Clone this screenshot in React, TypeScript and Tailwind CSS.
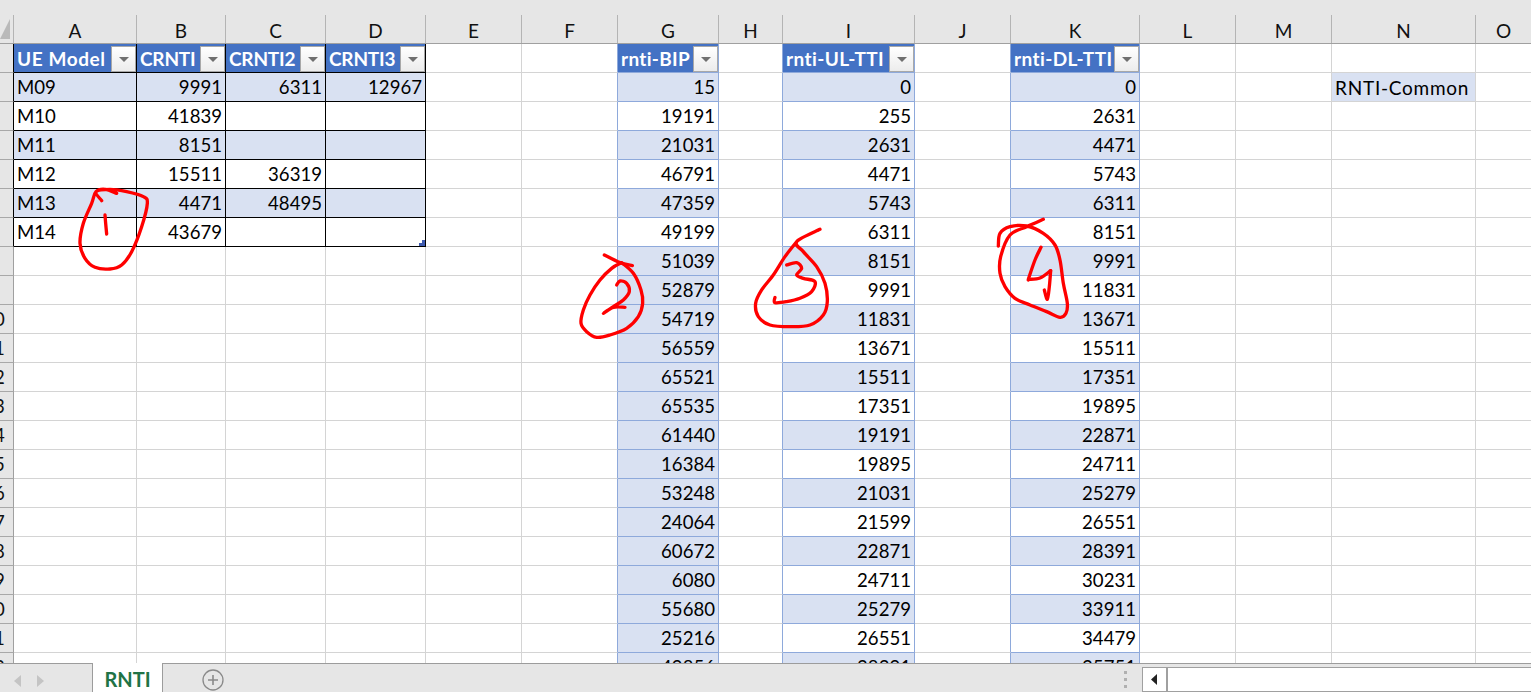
import React from "react";

type Col = { k: string; w: string };
const COLS: Col[] = [
  { k: "A", w: "w-[123px]" },
  { k: "B", w: "w-[89px]" },
  { k: "C", w: "w-[100px]" },
  { k: "D", w: "w-[100px]" },
  { k: "E", w: "w-[96px]" },
  { k: "F", w: "w-[96px]" },
  { k: "G", w: "w-[101px]" },
  { k: "H", w: "w-[64px]" },
  { k: "I", w: "w-[132px]" },
  { k: "J", w: "w-[96px]" },
  { k: "K", w: "w-[129px]" },
  { k: "L", w: "w-[96px]" },
  { k: "M", w: "w-[96px]" },
  { k: "N", w: "w-[144px]" },
  { k: "O", w: "w-[56px]" },
];

const T1: Record<string, string[]> = {
  A: ["M09", "M10", "M11", "M12", "M13", "M14"],
  B: ["9991", "41839", "8151", "15511", "4471", "43679"],
  C: ["6311", "", "", "36319", "48495", ""],
  D: ["12967", "", "", "", "", ""],
};
const T2: Record<string, string[]> = {
  G: ["15","19191","21031","46791","47359","49199","51039","52879","54719","56559","65521","65535","61440","16384","53248","24064","60672","6080","55680","25216","49856"],
  I: ["0","255","2631","4471","5743","6311","8151","9991","11831","13671","15511","17351","19191","19895","21031","21599","22871","24711","25279","26551","28391"],
  K: ["0","2631","4471","5743","6311","8151","9991","11831","13671","15511","17351","19895","22871","24711","25279","26551","28391","30231","33911","34479","35751"],
};
const HEAD: Record<string, { text: string; cls: string }> = {
  A: { text: "UE Model", cls: "tracking-[0.6px]" },
  B: { text: "CRNTI", cls: "tracking-[-0.2px]" },
  C: { text: "CRNTI2", cls: "tracking-[-0.2px]" },
  D: { text: "CRNTI3", cls: "tracking-[-0.2px]" },
  G: { text: "rnti-BIP", cls: "tracking-[0.3px]" },
  I: { text: "rnti-UL-TTI", cls: "tracking-[0.4px]" },
  K: { text: "rnti-DL-TTI", cls: "tracking-[0.4px]" },
};
const ROWS = Array.from({ length: 22 }, (_, i) => i + 1);

function FilterButton() {
  return (
    <span className="flex h-[26px] w-[25px] shrink-0 items-center justify-center self-end border border-[#a8a8a8] bg-linear-to-b from-white to-[#ececec]">
      <svg width="10" height="5" viewBox="0 0 10 5"><polygon points="0,0 10,0 5,5" fill="#6f6f6f" /></svg>
    </span>
  );
}

function cellBorders(k: string, r: number) {
  const t1 = "ABCD".includes(k) && r <= 7;
  const blueRight = "FGHIJK".includes(k);
  const right = t1 ? "border-r-black" : blueRight ? "border-r-[#8ea9db]" : "border-r-[#d4d4d4]";
  const bottom = t1 ? "border-b-black" : "GIK".includes(k) ? "border-b-[#8ea9db]" : "border-b-[#d4d4d4]";
  return `${right} ${bottom}`;
}

function Cell({ col, r }: { col: Col; r: number }) {
  const k = col.k;
  const borders = cellBorders(k, r);
  const base = `${col.w} shrink-0 h-[29px] border-r border-b ${borders}`;
  if (r === 1 && HEAD[k]) {
    return (
      <div className={`${base} flex items-center justify-between overflow-hidden bg-[#4472c4] pl-[3px] text-[19px] font-bold text-white`}>
        <span className={`whitespace-nowrap pt-[2px] ${HEAD[k].cls}`}>{HEAD[k].text}</span>
        <FilterButton />
      </div>
    );
  }
  const inT1 = "ABCD".includes(k) && r >= 2 && r <= 7;
  const inT2 = "GIK".includes(k) && r >= 2;
  const band =
    (inT1 && r % 2 === 0) ||
    (inT2 && r % 2 === 0) ||
    (k === "G" && r >= 8) ||
    (k === "N" && r === 2);
  const bg = band ? "bg-[#d9e1f2]" : "bg-white";
  const isCommon = k === "N" && r === 2;
  const value = inT1 ? T1[k][r - 2] : inT2 ? T2[k][r - 2] : isCommon ? "RNTI-Common" : "";
  const left = k === "A" || k === "N";
  const corner = k === "D" && r === 7;
  return (
    <div className={`${base} ${bg} relative flex items-center px-[3px] pt-[2px] text-black ${left ? "justify-start" : "justify-end"} ${isCommon ? "text-[19px] tracking-[0.75px]" : "text-[18.6px]"}`}>
      <span className="whitespace-nowrap">{value}</span>
      {corner && (
        <svg className="absolute bottom-0 right-0" width="6" height="6" viewBox="0 0 6 6">
          <polygon points="6,0 6,6 0,6 0,3 3,3 3,0" fill="#3f5bb0" />
        </svg>
      )}
    </div>
  );
}

function Row({ r }: { r: number }) {
  const black = r <= 7;
  return (
    <div className="flex">
      <div className={`h-[29px] w-[14px] shrink-0 overflow-hidden border-b border-r border-b-[#a8a8a8] bg-[#e6e6e6] pt-[2px] text-[18.6px] text-[#111] ${black ? "border-r-black" : "border-r-[#a0a0a0]"}`}>
        <div className="-ml-[20px] flex h-[26px] w-[28px] items-center justify-center">{r}</div>
      </div>
      {COLS.map((c) => (
        <Cell key={c.k} col={c} r={r} />
      ))}
    </div>
  );
}

type P = [number, number];
function smooth(pts: P[]) {
  let d = `M${pts[0][0]} ${pts[0][1]}`;
  for (let i = 0; i < pts.length - 1; i++) {
    const p0 = pts[Math.max(i - 1, 0)];
    const p1 = pts[i];
    const p2 = pts[i + 1];
    const p3 = pts[Math.min(i + 2, pts.length - 1)];
    const c1x = p1[0] + (p2[0] - p0[0]) / 6;
    const c1y = p1[1] + (p2[1] - p0[1]) / 6;
    const c2x = p2[0] - (p3[0] - p1[0]) / 6;
    const c2y = p2[1] - (p3[1] - p1[1]) / 6;
    d += ` C${c1x} ${c1y} ${c2x} ${c2y} ${p2[0]} ${p2[1]}`;
  }
  return d;
}

const SCRIBBLES: { t: string; lines: P[][] }[] = [
  {
    t: "translate(60 170) scale(0.3333)",
    lines: [
      [[170,70],[135,58],[108,65],[95,100],[70,160],[60,220],[75,265],[105,292],[150,297],[185,285],[215,245],[245,170],[262,100],[250,80],[200,65],[150,58],[108,65],[125,92]],
      [[135,135],[137,160],[140,192]],
    ],
  },
  {
    t: "translate(570 220) scale(0.3333)",
    lines: [
      [[103,105],[150,128],[187,137]],
      [[155,128],[190,160],[213,210],[218,250],[205,290],[170,325],[120,345],[80,352],[50,335],[33,310],[40,270],[60,225],[90,180],[125,145],[155,128]],
      [[140,195],[150,183],[170,190],[178,215],[160,240],[130,260],[100,280],[130,262],[165,262]],
    ],
  },
  {
    t: "translate(570 220) scale(0.3333)",
    lines: [
      [[750,28],[680,65],[700,95],[740,140],[765,190],[772,245],[760,285],[720,315],[660,320],[600,315],[565,290],[557,250],[575,210],[610,165],[645,110],[680,65]],
      [[650,135],[680,128],[695,145],[680,165],[700,175],[735,185],[725,215],[690,235],[650,245],[615,248],[615,232]],
    ],
  },
  {
    t: "translate(980 210) scale(0.3333)",
    lines: [
      [[55,108],[60,70],[90,50],[140,48],[190,70],[225,105],[240,150],[250,220],[262,280],[258,310],[240,322],[200,305],[150,285],[105,265],[75,230],[60,190],[62,140],[90,75],[140,50],[190,28]],
      [[183,112],[165,150],[146,205],[146,208]],
      [[146,208],[180,204],[212,182]],
      [[212,182],[208,230],[202,268],[193,240]],
    ],
  },
];

function Scribbles() {
  return (
    <svg className="pointer-events-none absolute left-0 top-0" width="1531" height="692" viewBox="0 0 1531 692" fill="none">
      {SCRIBBLES.map((s, i) => (
        <g key={i} transform={s.t} stroke="#ff0000" strokeWidth="10" strokeLinecap="round" strokeLinejoin="round">
          {s.lines.map((l, j) => (
            <path key={j} d={smooth(l)} />
          ))}
        </g>
      ))}
    </svg>
  );
}

export default function App() {
  return (
    <div className="relative flex h-[692px] w-[1531px] flex-col overflow-hidden bg-white font-['Lato',sans-serif]">
      <div className="h-[15px] shrink-0 bg-[#e6e6e6]" />
      <div className="flex h-[29px] shrink-0 border-b border-b-[#a0a0a0] bg-[#e6e6e6]">
        <div className="flex h-[28px] w-[14px] shrink-0 items-end border-r border-r-[#b4b4b4] pb-[3px]">
          <svg width="11" height="21" viewBox="0 0 11 21"><polygon points="10,0 10,20 0,20" fill="#b9b9b9" /></svg>
        </div>
        {COLS.map((c) => (
          <div key={c.k} className={`${c.w} flex h-[28px] shrink-0 items-center justify-center border-r border-r-[#b4b4b4] pt-[4px] text-[19px] text-[#111]`}>
            {c.k}
          </div>
        ))}
      </div>
      <div className="min-h-0 flex-1 overflow-hidden">
        {ROWS.map((r) => (
          <Row key={r} r={r} />
        ))}
      </div>
      <div className="flex h-[29px] shrink-0 items-stretch border-t border-t-[#9c9c9c] bg-[#e6e6e6]">
        <div className="flex w-[92px] shrink-0 items-center gap-[16px] pl-[3px] pt-[5px]">
          <svg width="7" height="12" viewBox="0 0 7 12" className="ml-[11px]"><polygon points="7,0 7,12 0,6" fill="#c4c4c4" /></svg>
          <svg width="7" height="12" viewBox="0 0 7 12"><polygon points="0,0 0,12 7,6" fill="#c4c4c4" /></svg>
        </div>
        <div className="-mt-px flex w-[71px] shrink-0 items-center justify-center border-x border-x-[#9c9c9c] bg-white pt-[3px] text-[20px] font-bold text-[#217346]">
          RNTI
        </div>
        <div className="flex w-[100px] shrink-0 items-center pl-[39px] pt-[4px]">
          <svg width="22" height="22" viewBox="0 0 22 22" fill="none" stroke="#8a8a8a">
            <circle cx="11" cy="11" r="10" strokeWidth="1.3" />
            <path d="M11 6v10M6 11h10" strokeWidth="1.6" />
          </svg>
        </div>
        <div className="flex flex-1 items-center justify-end">
          <div className="mr-[15px] mt-[3px] flex flex-col gap-[4px]">
            <span className="h-[3px] w-[3px] bg-[#b0b0b0]" />
            <span className="h-[3px] w-[3px] bg-[#b0b0b0]" />
            <span className="h-[3px] w-[3px] bg-[#b0b0b0]" />
          </div>
          <div className="mb-[-2px] flex h-[25px] w-[389px] shrink-0 border border-r-0 border-[#a0a0a0] bg-white">
            <div className="flex w-[25px] items-center justify-center border-r-2 border-r-[#a0a0a0] pr-[2px]">
              <svg width="6" height="11" viewBox="0 0 6 11"><polygon points="6,0 6,11 0,5.5" fill="#222" /></svg>
            </div>
          </div>
        </div>
      </div>
      <Scribbles />
    </div>
  );
}
